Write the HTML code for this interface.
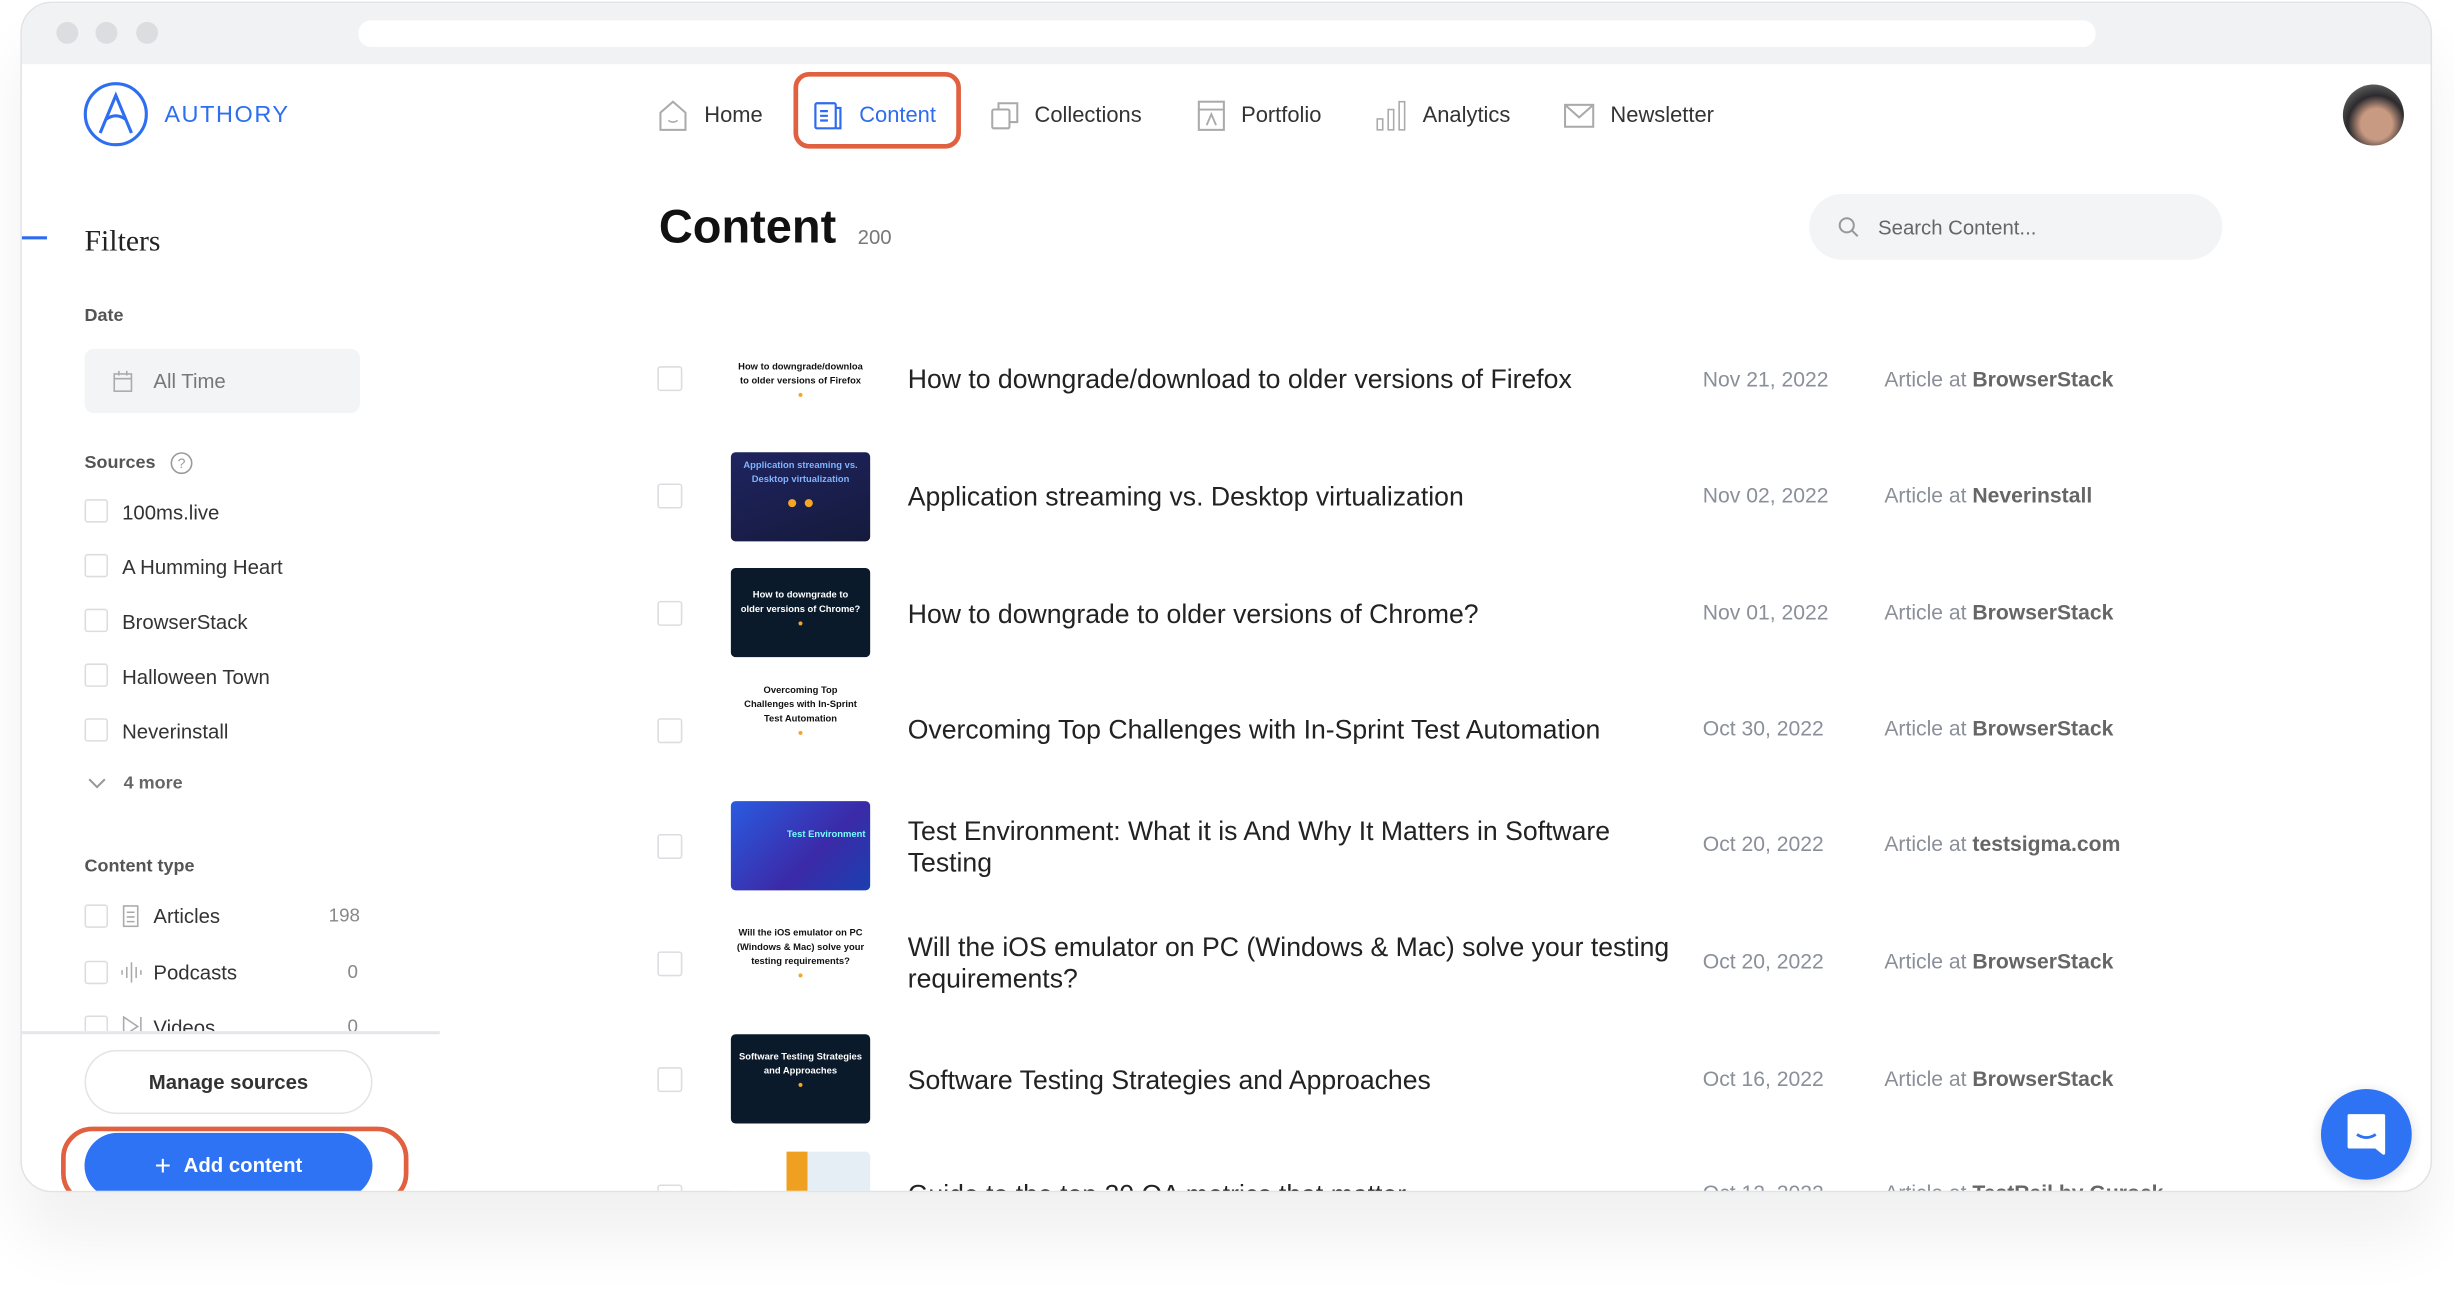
<!DOCTYPE html>
<html><head><meta charset="utf-8"><style>
*{box-sizing:border-box;margin:0;padding:0}
html,body{width:2454px;height:1294px;overflow:hidden;background:#fff;font-family:"Liberation Sans",sans-serif}
#s{position:absolute;left:0;top:0;width:1568px;height:827px;transform:scale(1.56505,1.5647);transform-origin:0 0}
.a{position:absolute}
.win{left:13px;top:1px;width:1541px;height:761px;border:1px solid #e2e3e6;border-radius:20px;overflow:hidden;background:#fff;box-shadow:0 30px 40px rgba(0,0,0,0.06)}
.t{position:absolute;white-space:nowrap;line-height:1}
.nav{font-size:14px;color:#333;top:64px}
.cb{position:absolute;width:15px;height:15px;border:1px solid #dcdde1;border-radius:2px;background:#fff}
.lab{font-size:13px;color:#333}
.ti{font-size:17px;color:#222}
.date{font-size:13.5px;color:#8a8f99}
.src{font-size:13.5px;color:#8a8f99}
.src b{color:#666}
.th{position:absolute;left:453px;width:89px;height:57px;border-radius:3px;overflow:hidden;font-size:6px;font-weight:bold;text-align:center;line-height:1.5}
</style></head><body><div id="s">
<div class="a win">
 <div class="a" style="left:0;top:0;width:1541px;height:39px;background:#f1f2f4"></div>
 <div class="a" style="left:22px;top:12px;width:14px;height:14px;border-radius:50%;background:#dcdde0"></div>
 <div class="a" style="left:47px;top:12px;width:14px;height:14px;border-radius:50%;background:#dcdde0"></div>
 <div class="a" style="left:73px;top:12px;width:14px;height:14px;border-radius:50%;background:#dcdde0"></div>
 <div class="a" style="left:215px;top:11px;width:1110px;height:17px;border-radius:8px;background:#fff"></div>

 <svg class="a" style="left:39px;top:50px" width="44" height="44" viewBox="0 0 44 44"><circle cx="21" cy="21" r="19.5" fill="none" stroke="#2d6ff0" stroke-width="2"/><path d="M11 33 L21 9 L31 33 M15 24 Q21 20 27 24" fill="none" stroke="#2d6ff0" stroke-width="2"/></svg>
 <div class="t" style="left:91px;top:64px;font-size:15px;color:#2d6ff0;letter-spacing:1px">AUTHORY</div>

 <svg class="a" style="left:407px;top:62px" width="18" height="20"><path d="M1 8 L9 1 L17 8 V19 H1 Z" fill="none" stroke="#aaa" stroke-width="1.3"/><path d="M6 13 Q9 15 12 13" fill="none" stroke="#aaa"/></svg>
 <div class="t nav" style="left:436px">Home</div>
 <div class="a" style="left:493px;top:44px;width:107px;height:49px;border:3px solid #e0603f;border-radius:10px"></div>
 <svg class="a" style="left:506px;top:63px" width="18" height="18"><rect x="1" y="1" width="13" height="16" rx="1" fill="none" stroke="#2f6bf0" stroke-width="1.4"/><path d="M14 4 H17 V17 H14 M4 6h5M4 9h5M4 12h5" stroke="#2f6bf0" stroke-width="1.4" fill="none"/></svg>
 <div class="t nav" style="left:535px;color:#2f6bf0">Content</div>
 <svg class="a" style="left:619px;top:63px" width="18" height="18"><rect x="1" y="5" width="11" height="12" rx="1" fill="none" stroke="#aaa" stroke-width="1.3"/><path d="M5 5 V1 H17 V13 H12" fill="none" stroke="#aaa" stroke-width="1.3"/></svg>
 <div class="t nav" style="left:647px">Collections</div>
 <svg class="a" style="left:751px;top:62px" width="18" height="20"><rect x="1" y="1" width="16" height="18" fill="none" stroke="#aaa" stroke-width="1.3"/><path d="M1 6 H17 M6 16 L9 9 L12 16" fill="none" stroke="#aaa" stroke-width="1.2"/></svg>
 <div class="t nav" style="left:779px">Portfolio</div>
 <svg class="a" style="left:865px;top:62px" width="20" height="20"><rect x="1" y="12" width="3.5" height="7" fill="none" stroke="#aaa"/><rect x="8" y="6" width="3.5" height="13" fill="none" stroke="#aaa"/><rect x="15" y="1" width="3.5" height="18" fill="none" stroke="#aaa"/></svg>
 <div class="t nav" style="left:895px">Analytics</div>
 <svg class="a" style="left:985px;top:64px" width="20" height="16"><rect x="1" y="1" width="18" height="14" fill="none" stroke="#aaa" stroke-width="1.3"/><path d="M1 1 L10 9 L19 1" fill="none" stroke="#aaa" stroke-width="1.3"/></svg>
 <div class="t nav" style="left:1015px">Newsletter</div>
 <div class="a" style="left:1483px;top:52px;width:39px;height:39px;border-radius:50%;background:radial-gradient(circle at 55% 65%,#c99a82 0 30%,#2b2a2e 55%,#8d8a86 100%)"></div>

 <div class="a" style="left:0;top:149px;width:16px;height:2px;background:#2f6bf0"></div>
 <div class="t" style="left:40px;top:143px;font-family:'Liberation Serif',serif;font-size:19px;color:#222">Filters</div>
 <div class="t" style="left:40px;top:195px;font-size:11.5px;color:#555;font-weight:bold">Date</div>
 <div class="a" style="left:40px;top:221px;width:176px;height:41px;background:#f3f4f6;border-radius:6px"></div>
 <svg class="a" style="left:58px;top:234px" width="13" height="15"><rect x="1" y="3" width="11" height="11" fill="none" stroke="#aaa"/><path d="M1 6H12M4 1V4M9 1V4" stroke="#aaa"/></svg>
 <div class="t" style="left:84px;top:235px;font-size:13px;color:#777">All Time</div>
 <div class="t" style="left:40px;top:289px;font-size:11.5px;color:#555;font-weight:bold">Sources</div>
 <div class="a" style="left:95px;top:287px;width:14px;height:14px;border:1.3px solid #999;border-radius:50%;font-size:9px;color:#999;text-align:center;line-height:12px">?</div>
 <div class="cb" style="left:40px;top:317px"></div><div class="t lab" style="left:64px;top:319px">100ms.live</div>
 <div class="cb" style="left:40px;top:352px"></div><div class="t lab" style="left:64px;top:354px">A Humming Heart</div>
 <div class="cb" style="left:40px;top:387px"></div><div class="t lab" style="left:64px;top:389px">BrowserStack</div>
 <div class="cb" style="left:40px;top:422px"></div><div class="t lab" style="left:64px;top:424px">Halloween Town</div>
 <div class="cb" style="left:40px;top:457px"></div><div class="t lab" style="left:64px;top:459px">Neverinstall</div>
 <svg class="a" style="left:42px;top:495px" width="12" height="8"><path d="M1 1L6 6L11 1" fill="none" stroke="#999" stroke-width="1.3"/></svg>
 <div class="t" style="left:65px;top:494px;font-size:11.5px;color:#666;font-weight:bold">4 more</div>
 <div class="t" style="left:40px;top:547px;font-size:11.5px;color:#555;font-weight:bold">Content type</div>
 <div class="cb" style="left:40px;top:576px"></div>
 <svg class="a" style="left:64px;top:576px" width="11" height="15"><rect x="1" y="1" width="9" height="13" fill="none" stroke="#aaa"/><path d="M3 5h5M3 8h5M3 11h5" stroke="#aaa"/></svg>
 <div class="t lab" style="left:84px;top:577px">Articles</div><div class="t" style="left:196px;top:577px;font-size:12px;color:#888">198</div>
 <div class="cb" style="left:40px;top:612px"></div>
 <svg class="a" style="left:63px;top:612px" width="14" height="14"><path d="M1 6v3M4 4v7M7 1v13M10 4v7M13 6v3" stroke="#aaa"/></svg>
 <div class="t lab" style="left:84px;top:613px">Podcasts</div><div class="t" style="left:208px;top:613px;font-size:12px;color:#888">0</div>
 <div class="cb" style="left:40px;top:647px"></div>
 <svg class="a" style="left:64px;top:647px" width="13" height="14"><path d="M1 1V13L10 7Z" fill="none" stroke="#aaa"/><path d="M12 1V13" stroke="#aaa"/></svg>
 <div class="t lab" style="left:84px;top:648px">Videos</div><div class="t" style="left:208px;top:648px;font-size:12px;color:#888">0</div>
 <div class="a" style="left:0;top:657px;width:267px;height:104px;background:#fff;border-top:2px solid #e6e7ea"></div>
 <div class="a" style="left:40px;top:669px;width:184px;height:41px;border:1px solid #e3e4e7;border-radius:21px;font-size:13px;font-weight:bold;color:#333;text-align:center;line-height:39px">Manage sources</div>
 <div class="a" style="left:25px;top:718px;width:222px;height:50px;border:3px solid #e0603f;border-radius:20px"></div>
 <div class="a" style="left:40px;top:722px;width:184px;height:42px;background:#2f73f5;border-radius:21px;font-size:13px;font-weight:bold;color:#fff;text-align:center;line-height:41px"><span style="font-size:18px;font-weight:normal;vertical-align:-2px;margin-right:8px">+</span>Add content</div>

 <div class="t" style="left:407px;top:129px;font-size:30px;font-weight:bold;color:#111">Content</div>
 <div class="t" style="left:534px;top:143px;font-size:13px;color:#777">200</div>
 <div class="a" style="left:1142px;top:122px;width:264px;height:42px;background:#f3f4f6;border-radius:21px"></div>
 <svg class="a" style="left:1160px;top:136px" width="14" height="14"><circle cx="6" cy="6" r="4.5" fill="none" stroke="#999" stroke-width="1.3"/><path d="M9.5 9.5L13 13" stroke="#999" stroke-width="1.3"/></svg>
 <div class="t" style="left:1186px;top:137px;font-size:13px;color:#666">Search Content...</div>

 <div class="cb" style="left:406px;top:232px;width:16px;height:16px"></div>
 <div class="th" style="top:212px;background:#fff;color:#111;padding-top:17px">How to downgrade/downloa<br>to older versions of Firefox<br><span style="color:#f5a623">●</span></div>
 <div class="t ti" style="left:566px;top:232px">How to downgrade/download to older versions of Firefox</div>
 <div class="t date" style="left:1074px;top:234px">Nov 21, 2022</div><div class="t src" style="left:1190px;top:234px">Article at <b>BrowserStack</b></div>

 <div class="cb" style="left:406px;top:307px;width:16px;height:16px"></div>
 <div class="th" style="top:287px;background:linear-gradient(160deg,#1f2460,#151a3c);color:#7fb4ff;padding-top:5px">Application streaming vs.<br>Desktop virtualization<br><span style="color:#f5a623;font-size:12px">● ●</span></div>
 <div class="t ti" style="left:566px;top:307px">Application streaming vs. Desktop virtualization</div>
 <div class="t date" style="left:1074px;top:308px">Nov 02, 2022</div><div class="t src" style="left:1190px;top:308px">Article at <b>Neverinstall</b></div>

 <div class="cb" style="left:406px;top:382px;width:16px;height:16px"></div>
 <div class="th" style="top:361px;background:#0b1a2b;color:#fff;padding-top:14px">How to downgrade to<br>older versions of Chrome?<br><span style="color:#f5a623">●</span></div>
 <div class="t ti" style="left:566px;top:382px">How to downgrade to older versions of Chrome?</div>
 <div class="t date" style="left:1074px;top:383px">Nov 01, 2022</div><div class="t src" style="left:1190px;top:383px">Article at <b>BrowserStack</b></div>

 <div class="cb" style="left:406px;top:457px;width:16px;height:16px"></div>
 <div class="th" style="top:436px;background:#fff;color:#111;padding-top:0">Overcoming Top<br>Challenges with In-Sprint<br>Test Automation<br><span style="color:#f5a623">●</span></div>
 <div class="t ti" style="left:566px;top:456px">Overcoming Top Challenges with In-Sprint Test Automation</div>
 <div class="t date" style="left:1074px;top:457px">Oct 30, 2022</div><div class="t src" style="left:1190px;top:457px">Article at <b>BrowserStack</b></div>

 <div class="cb" style="left:406px;top:531px;width:16px;height:16px"></div>
 <div class="th" style="top:510px;background:linear-gradient(135deg,#2a5be0,#3b2aa8 60%,#1b3fb0);color:#7ff;text-align:right;padding:18px 3px 0 0">Test Environment</div>
 <div class="t ti" style="left:566px;top:520px;line-height:20px">Test Environment: What it is And Why It Matters in Software<br>Testing</div>
 <div class="t date" style="left:1074px;top:531px">Oct 20, 2022</div><div class="t src" style="left:1190px;top:531px">Article at <b>testsigma.com</b></div>

 <div class="cb" style="left:406px;top:606px;width:16px;height:16px"></div>
 <div class="th" style="top:585px;background:#fff;color:#111;padding-top:6px">Will the iOS emulator on PC<br>(Windows &amp; Mac) solve your<br>testing requirements?<br><span style="color:#f5a623">●</span></div>
 <div class="t ti" style="left:566px;top:594px;line-height:20px">Will the iOS emulator on PC (Windows &amp; Mac) solve your testing<br>requirements?</div>
 <div class="t date" style="left:1074px;top:606px">Oct 20, 2022</div><div class="t src" style="left:1190px;top:606px">Article at <b>BrowserStack</b></div>

 <div class="cb" style="left:406px;top:680px;width:16px;height:16px"></div>
 <div class="th" style="top:659px;background:#0b1a2b;color:#fff;padding-top:11px">Software Testing Strategies<br>and Approaches<br><span style="color:#f5a623">●</span></div>
 <div class="t ti" style="left:566px;top:680px">Software Testing Strategies and Approaches</div>
 <div class="t date" style="left:1074px;top:681px">Oct 16, 2022</div><div class="t src" style="left:1190px;top:681px">Article at <b>BrowserStack</b></div>

 <div class="cb" style="left:406px;top:755px;width:16px;height:16px"></div>
 <div class="th" style="top:734px;background:linear-gradient(90deg,#fff 40%,#f0a020 40% 55%,#e6eef5 55%)"></div>
 <div class="t ti" style="left:566px;top:753px">Guide to the top 20 QA metrics that matter</div>
 <div class="t date" style="left:1074px;top:754px">Oct 12, 2022</div><div class="t src" style="left:1190px;top:754px">Article at <b>TestRail by Gurock</b></div>

 <div class="a" style="left:1469px;top:694px;width:58px;height:58px;border-radius:50%;background:#2f73f5;box-shadow:0 2px 8px rgba(0,0,0,.15)"></div>
 <svg class="a" style="left:1483px;top:708px" width="30" height="30"><path d="M4 3 H26 V27 L21 23 H4 Z" fill="#fff" stroke="#fff" stroke-linejoin="round" stroke-width="2"/><path d="M9 15 Q15 19 21 15" fill="none" stroke="#2f73f5" stroke-width="1.8"/></svg>
</div>
</div></body></html>
